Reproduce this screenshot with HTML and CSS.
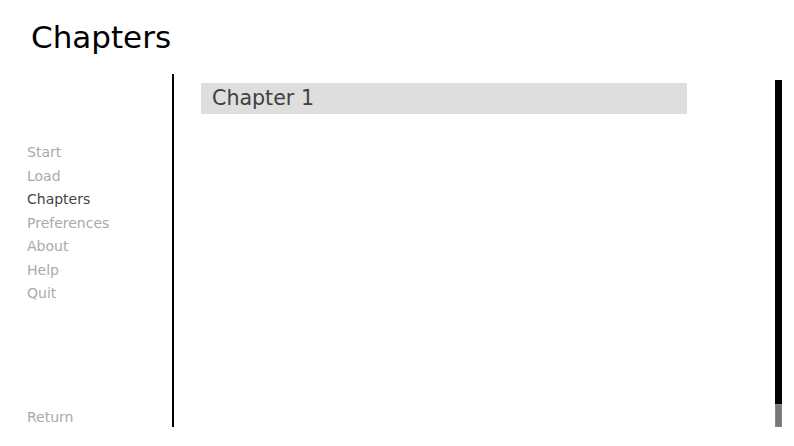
FILE: index.html
```html
<!DOCTYPE html>
<html>
<head>
<meta charset="utf-8">
<link rel="stylesheet" href="styles.css">
</head>
<body>
<div class="page">
  <header class="header"><h1 class="title">Chapters</h1></header>
  <div class="main">
    <nav class="sidebar">
      <ul class="menu">
        <li class="item">Start</li>
        <li class="item">Load</li>
        <li class="item active">Chapters</li>
        <li class="item">Preferences</li>
        <li class="item">About</li>
        <li class="item">Help</li>
        <li class="item">Quit</li>
      </ul>
      <div class="item return">Return</div>
    </nav>
    <section class="content">
      <div class="chapter">Chapter 1</div>
    </section>
    <div class="scrollbar"><div class="track"></div><div class="thumb"></div></div>
  </div>
</div>
</body>
</html>
```
FILE: styles.css
```css
html, body {
  margin: 0;
  padding: 0;
  background: #fff;
}
.page {
  width: 794px;
  height: 446px;
  font-family: "DejaVu Sans", sans-serif;
  display: flex;
  flex-direction: column;
}
.header {
  height: 74px;
  padding-left: 31px;
  box-sizing: border-box;
  padding-top: 19px;
}
.title {
  margin: 0;
  font-size: 31px;
  font-weight: normal;
  color: #000;
  line-height: 36px;
}
.main {
  display: flex;
  height: 353px;
}
.sidebar {
  width: 174px;
  box-sizing: border-box;
  border-right: 2px solid #000;
  display: flex;
  flex-direction: column;
  padding-left: 27px;
  padding-top: 67px;
}
.menu {
  list-style: none;
  margin: 0;
  padding: 0;
}
.item {
  font-size: 14px;
  line-height: 23.5px;
  color: #aaaaaa;
}
.item.active {
  color: #444444;
}
.return {
  margin-top: auto;
  margin-bottom: -2px;
}
.content {
  padding-left: 27px;
  padding-top: 9px;
}
.chapter {
  width: 475px;
  height: 31px;
  line-height: 31px;
  background: #dedede;
  color: #404040;
  font-size: 20.6px;
  padding-left: 11px;
}
.scrollbar {
  margin-left: auto;
  margin-right: 12px;
  margin-top: 6px;
  width: 7px;
  display: flex;
  flex-direction: column;
}
.track {
  flex: 1;
  background: #000;
}
.thumb {
  height: 23px;
  background: #777;
  box-shadow: inset 0 0 0 1px #888;
}
```
